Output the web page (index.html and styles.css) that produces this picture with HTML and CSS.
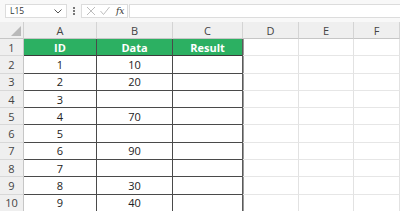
FILE: index.html
```html
<!DOCTYPE html>
<html>
<head>
<meta charset="utf-8">
<link rel="stylesheet" href="styles.css">
</head>
<body>
<div class="bar">
  <div class="namebox"><span>L15</span>
    <svg class="chev" width="8" height="5" viewBox="0 0 8 5"><path d="M0.5 0.5 L4 4 L7.5 0.5" fill="none" stroke="#555" stroke-width="1"/></svg>
  </div>
  <div class="dots"><i></i><i></i><i></i></div>
  <div class="fxbox">
    <svg width="10" height="10" viewBox="0 0 10 10"><path d="M1 1 L9 9 M9 1 L1 9" stroke="#bdbdbd" stroke-width="1" fill="none"/></svg>
    <svg width="10" height="10" viewBox="0 0 10 10"><path d="M0.5 5 L3.5 8.5 L9.5 1" stroke="#bdbdbd" stroke-width="1" fill="none"/></svg>
    <span class="fx">fx</span>
  </div>
  <div class="formula"></div>
</div>
<div class="sheet">
  <div class="corner"><svg width="10" height="10" viewBox="0 0 10 10"><path d="M10 0 L10 10 L0 10 Z" fill="#b9b9b9"/></svg></div>
  <div class="ch">A</div><div class="ch">B</div><div class="ch">C</div><div class="ch">D</div><div class="ch">E</div><div class="ch">F</div>

  <div class="rh">1</div><div class="c hd">ID</div><div class="c hd">Data</div><div class="c hd last">Result</div><div class="e"></div><div class="e"></div><div class="e"></div>
  <div class="rh">2</div><div class="c">1</div><div class="c">10</div><div class="c last"></div><div class="e"></div><div class="e"></div><div class="e"></div>
  <div class="rh">3</div><div class="c">2</div><div class="c">20</div><div class="c last"></div><div class="e"></div><div class="e"></div><div class="e"></div>
  <div class="rh">4</div><div class="c">3</div><div class="c"></div><div class="c last"></div><div class="e"></div><div class="e"></div><div class="e"></div>
  <div class="rh">5</div><div class="c">4</div><div class="c">70</div><div class="c last"></div><div class="e"></div><div class="e"></div><div class="e"></div>
  <div class="rh">6</div><div class="c">5</div><div class="c"></div><div class="c last"></div><div class="e"></div><div class="e"></div><div class="e"></div>
  <div class="rh">7</div><div class="c">6</div><div class="c">90</div><div class="c last"></div><div class="e"></div><div class="e"></div><div class="e"></div>
  <div class="rh">8</div><div class="c">7</div><div class="c"></div><div class="c last"></div><div class="e"></div><div class="e"></div><div class="e"></div>
  <div class="rh">9</div><div class="c">8</div><div class="c">30</div><div class="c last"></div><div class="e"></div><div class="e"></div><div class="e"></div>
  <div class="rh">10</div><div class="c">9</div><div class="c">40</div><div class="c last"></div><div class="e"></div><div class="e"></div><div class="e"></div>
</div>
</body>
</html>
```
FILE: styles.css
```css
* { box-sizing: border-box; }
html, body { margin: 0; padding: 0; background: #fff; overflow: hidden; }
body { width: 400px; height: 211px; font-family: "Open Sans", "Noto Sans", sans-serif; }

.bar {
  height: 22px;
  background: #f8f8f8;
  display: flex;
  align-items: flex-start;
  padding: 4px 0 0 5px;
}
.namebox {
  width: 62px; height: 14px;
  background: #fff;
  border: 1px solid #dcdcdc;
  display: flex; align-items: center; justify-content: space-between;
  padding: 0 4px 0 4px;
  font-size: 8.5px; color: #333;
}
.namebox span { line-height: 12px; }
.chev { margin-top: 1px; }
.dots {
  width: 14px; height: 14px;
  display: flex; flex-direction: column; align-items: center; justify-content: center; gap: 1.5px;
}
.dots i { display: block; width: 1.5px; height: 1.5px; background: #777; }
.fxbox {
  width: 47px; height: 14px;
  background: #fff;
  border: 1px solid #dcdcdc;
  display: flex; align-items: center; gap: 4px;
  padding-left: 4px;
}
.fx { font-family: "DejaVu Serif", "Liberation Serif", serif; font-style: italic; font-size: 9px; color: #333; margin-left: 2px; line-height: 12px; }
.formula {
  flex: 1; height: 14px; margin-left: 1px;
  background: #fff;
  border: 1px solid #dcdcdc;
  border-right: none;
}

.sheet {
  display: grid;
  grid-template-columns: 24px 73px 76px 70px 56px 55px 46px;
  grid-template-rows: 17px repeat(10, 17.3px);
}
.corner {
  background: #efefef;
  border-right: 1px solid #d0d0d0;
  border-bottom: 1px solid #c6c6c6;
  display: flex; align-items: flex-end; justify-content: flex-end;
  padding: 0 2px 2px 0;
}
.ch {
  background: #efefef;
  border-right: 1px solid #d4d4d4;
  border-bottom: 1px solid #c6c6c6;
  font-family: "Open Sans", sans-serif;
  font-size: 11px; color: #444;
  display: flex; align-items: center; justify-content: center;
}
.rh {
  background: #efefef;
  border-right: 1px solid #c6c6c6;
  border-bottom: 1px solid #d8d8d8;
  font-size: 11px; color: #444;
  display: flex; align-items: center; justify-content: center;
}
.c {
  border-right: 1px solid #4a4a4a;
  border-bottom: 1px solid #4a4a4a;
  font-size: 11px; color: #222;
  display: flex; align-items: center; justify-content: center;
}
.c.last { border-right: 1px solid #5a5a5a; box-shadow: 1px 0 0 #9a9a9a; }
.c.hd {
  background: #2cb062;
  color: #fff;
  font-weight: 700;
  border-bottom-color: #3a3a3a;
}
.e {
  border-right: 1px solid #e2e2e2;
  border-bottom: 1px solid #e6e6e6;
}
```
